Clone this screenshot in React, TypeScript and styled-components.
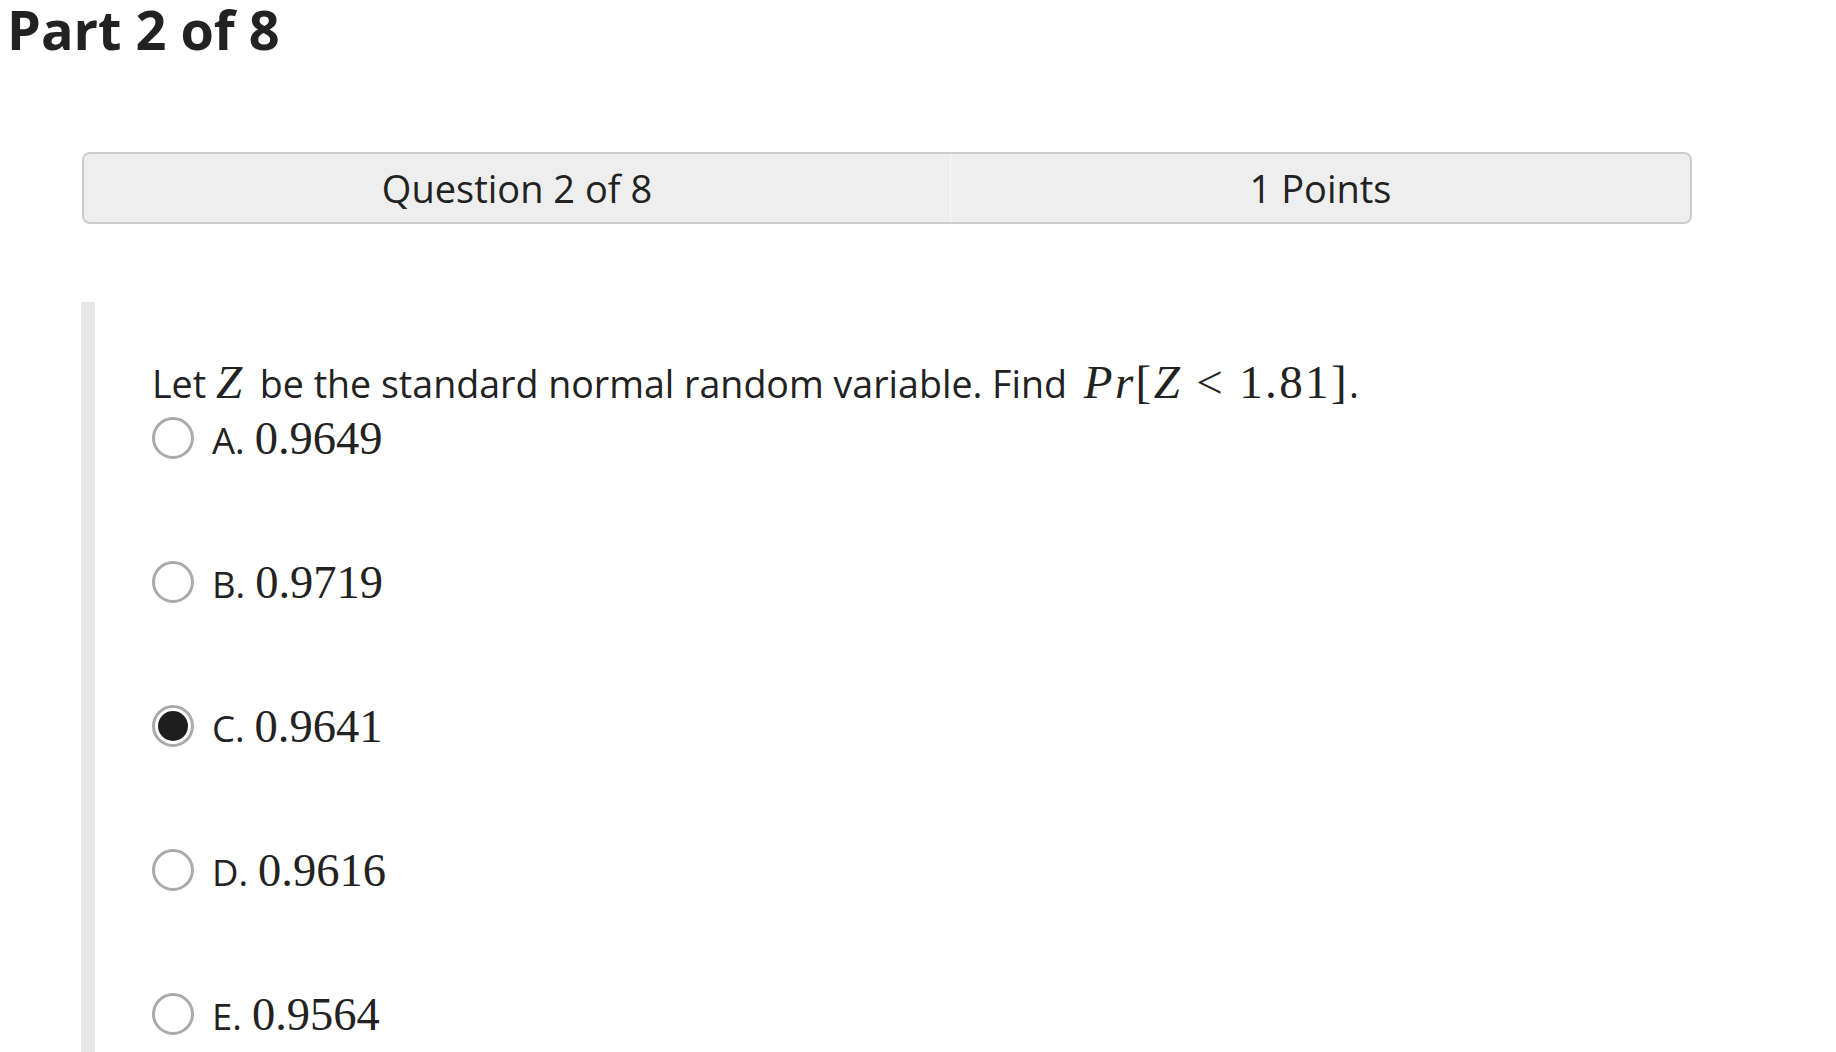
import React from "react";
import styled, { createGlobalStyle } from "styled-components";

const Global = createGlobalStyle`
  html, body {
    margin: 0;
    padding: 0;
    background: #ffffff;
    overflow: hidden;
  }
  body {
    font-family: "Open Sans", "Liberation Sans", sans-serif;
    color: #222222;
  }
`;

const Page = styled.div`
  display: flex;
  flex-direction: column;
  height: 1052px;
`;

const Title = styled.h1`
  margin: 0;
  padding-left: 7px;
  font-size: 54px;
  line-height: 58px;
  font-weight: 700;
  color: #222222;
`;

const HeaderBar = styled.div`
  margin: 94px 0 0 82px;
  width: 1610px;
  height: 72px;
  box-sizing: border-box;
  display: grid;
  grid-template-columns: 866px 1fr;
  background: #eeeeee;
  border: 2px solid #cccccc;
  border-radius: 8px;
  overflow: hidden;
`;

const HeaderCell = styled.div<{ $divider?: boolean }>`
  display: flex;
  align-items: center;
  justify-content: center;
  font-size: 38px;
  color: #222222;
  border-left: ${(p) => (p.$divider ? "1px solid #f9f9f9" : "none")};
`;

const QuestionArea = styled.div`
  margin: 78px 0 0 81px;
  flex: 1;
  border-left: 14px solid #e6e6e6;
  padding: 55px 0 0 57px;
  display: flex;
  flex-direction: column;
`;

const Prompt = styled.div`
  font-size: 37.6px;
  line-height: 50px;
  color: #222222;
`;

const MathText = styled.span<{ $gapBefore?: number; $gapAfter?: number }>`
  font-family: "Liberation Serif", "Times New Roman", serif;
  font-size: 47px;
  line-height: 50px;
  letter-spacing: 2.4px;
  margin-left: ${(p) => p.$gapBefore ?? 0}px;
  margin-right: ${(p) => p.$gapAfter ?? 0}px;
`;

const MathVar = styled.i<{ $wide?: boolean }>`
  font-style: italic;
  letter-spacing: ${(p) => (p.$wide ? "8px" : "inherit")};
`;

const Rel = styled.span`
  margin: 0 14px;
`;

const Options = styled.div`
  display: flex;
  flex-direction: column;
  gap: 84px;
  margin-top: -1px;
`;

const OptionRow = styled.label`
  display: flex;
  align-items: center;
  height: 60px;
  gap: 18px;
`;

const Radio = styled.span<{ $checked?: boolean }>`
  position: relative;
  width: 42px;
  height: 42px;
  box-sizing: border-box;
  border-radius: 50%;
  border: 3px solid #aaaaaa;
  background: #ffffff;
  flex-shrink: 0;
  &::after {
    content: "";
    display: ${(p) => (p.$checked ? "block" : "none")};
    position: absolute;
    left: 50%;
    top: 50%;
    width: 30px;
    height: 30px;
    margin: -15px 0 0 -15px;
    border-radius: 50%;
    background: radial-gradient(circle, #1e1e1e 0%, #1e1e1e 78%, #666666 100%);
  }
`;

const OptionLabel = styled.span`
  font-size: 36.5px;
  color: #222222;
`;

const OptionValue = styled.span`
  font-family: "Liberation Serif", "Times New Roman", serif;
  font-size: 46.5px;
  margin-left: 10px;
  color: #222222;
`;

const options = [
  { letter: "A.", value: "0.9649", checked: false },
  { letter: "B.", value: "0.9719", checked: false },
  { letter: "C.", value: "0.9641", checked: true },
  { letter: "D.", value: "0.9616", checked: false },
  { letter: "E.", value: "0.9564", checked: false },
];

export default function App() {
  return (
    <>
      <Global />
      <Page>
        <Title>Part 2 of 8</Title>
        <HeaderBar>
          <HeaderCell>Question 2 of 8</HeaderCell>
          <HeaderCell $divider>1 Points</HeaderCell>
        </HeaderBar>
        <QuestionArea>
          <Prompt>
            Let{" "}
            <MathText>
              <MathVar $wide>Z</MathVar>
            </MathText>{" "}
            be the standard normal random variable. Find{" "}
            <MathText $gapBefore={7}>
              <MathVar>Pr</MathVar>[<MathVar>Z</MathVar>
              <Rel>&lt;</Rel>1.81]
            </MathText>
            .
          </Prompt>
          <Options>
            {options.map((o) => (
              <OptionRow key={o.letter}>
                <Radio $checked={o.checked} />
                <OptionLabel>
                  {o.letter}
                  <OptionValue>{o.value}</OptionValue>
                </OptionLabel>
              </OptionRow>
            ))}
          </Options>
        </QuestionArea>
      </Page>
    </>
  );
}
